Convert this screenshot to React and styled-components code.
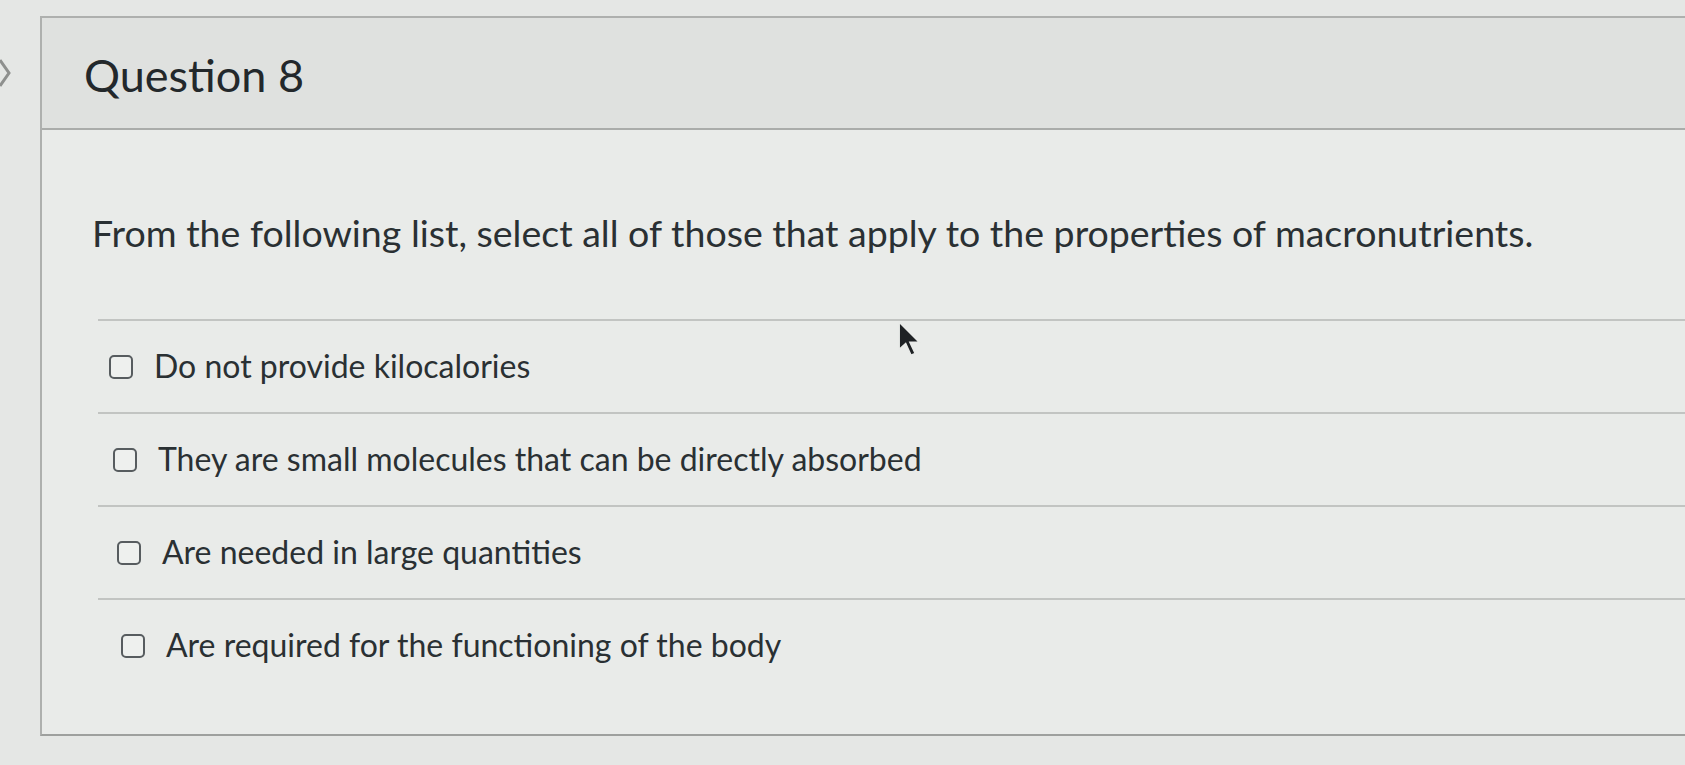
import React from "react";
import styled, { createGlobalStyle } from "styled-components";

const Global = createGlobalStyle`
  html, body { margin: 0; padding: 0; background: #e4e6e4; }
  body { font-family: Lato, "Open Sans", sans-serif; color: #2c3235; overflow: hidden; }
`;

const Page = styled.div`
  width: 1685px;
  height: 765px;
  display: flex;
  padding-top: 16px;
  box-sizing: border-box;
  overflow: hidden;
  position: relative;
  background: #e5e7e5;
`;

const Gutter = styled.div`
  width: 40px;
  flex: none;
  padding-top: 42px;
  box-sizing: border-box;
`;

const Panel = styled.section`
  flex: none;
  width: 1700px;
  height: 720px;
  border-top: 2px solid #aeb0ae;
  border-left: 2px solid #aeb0ae;
  border-bottom: 2px solid #9ea09e;
  background: #e9ebe9;
  box-sizing: border-box;
  display: flex;
  flex-direction: column;
`;

const Header = styled.header`
  height: 112px;
  background: #dfe1df;
  border-bottom: 2px solid #aaacaa;
  display: flex;
  align-items: center;
  padding: 4px 0 0 42px;
  box-sizing: border-box;
`;

const Title = styled.h2`
  margin: 0;
  font-family: Lato, sans-serif;
  font-weight: 400;
  font-size: 45px;
  color: #23282b;
`;

const Body = styled.div`
  padding: 81px 0 0 50px;
  display: flex;
  flex-direction: column;
`;

const Prompt = styled.p`
  margin: 0;
  font-size: 37.5px;
  line-height: 44px;
  color: #2a3033;
`;

const Answers = styled.ul`
  list-style: none;
  margin: 64px 0 0 6px;
  padding: 0;
`;

const Answer = styled.li`
  height: 93px;
  display: flex;
  align-items: center;
  gap: 21px;
  padding-left: ${(p) => 11 + p.$shift}px;
  border-top: 2px solid #c2c4c2;
  box-sizing: border-box;
`;

const Box = styled.span`
  width: 24px;
  height: 24px;
  flex: none;
  border: 2px solid #575c5f;
  border-radius: 5px;
  background: #eef0ee;
  box-sizing: border-box;
`;

const Label = styled.span`
  font-size: 32px;
  color: #2a3033;
  padding-bottom: 2px;
`;

const Cursor = styled.svg`
  position: absolute;
  left: 896px;
  top: 321px;
`;

const options = [
  "Do not provide kilocalories",
  "They are small molecules that can be directly absorbed",
  "Are needed in large quantities",
  "Are required for the functioning of the body",
];

export default function App() {
  return (
    <>
      <Global />
      <Page>
        <Gutter>
          <svg width="12" height="30" viewBox="0 0 12 30">
            <path d="M0 2 L9 15 L0 28" fill="none" stroke="#8e908e" strokeWidth="3" />
          </svg>
        </Gutter>
        <Panel>
          <Header>
            <Title>Question 8</Title>
          </Header>
          <Body>
            <Prompt>
              From the following list, select all of those that apply to the properties of macronutrients.
            </Prompt>
            <Answers>
              {options.map((o, i) => (
                <Answer key={o} $shift={i * 4}>
                  <Box />
                  <Label>{o}</Label>
                </Answer>
              ))}
            </Answers>
          </Body>
        </Panel>
        <Cursor width="30" height="40" viewBox="0 0 24 34">
          <path d="M2 1 L2 24 L7.5 19 L12 29 L15.5 27.5 L11 18 L19 18 Z" fill="#1e2124" stroke="#e8eae8" strokeWidth="1.2" />
        </Cursor>
      </Page>
    </>
  );
}
